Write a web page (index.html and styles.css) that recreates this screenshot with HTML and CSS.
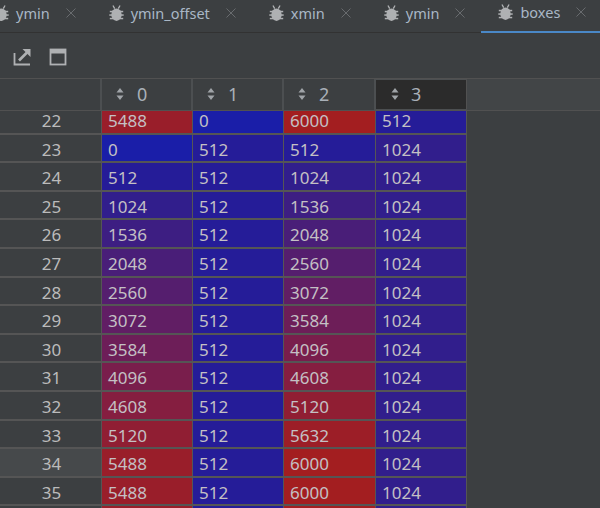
FILE: index.html
```html
<!DOCTYPE html>
<html lang="en">
<head>
<meta charset="utf-8">
<title>boxes</title>
<link rel="stylesheet" href="styles.css">
</head>
<body>
<svg class="defs" width="0" height="0" aria-hidden="true">
  <symbol id="bug" viewBox="0 0 15 16">
    <ellipse cx="7.500" cy="9.700" rx="5.200" ry="6.200"/>
    <path d="M3.400 .8l1.100-.6 1.800 3-1.200.7zM11.600 .8l-1.100-.6-1.800 3 1.200.7z"/>
    <rect x="0.800" y="5.800" width="13.400" height="1.500"/>
    <rect x="0.300" y="9.300" width="14.400" height="1.500"/>
    <rect x="0.800" y="12.800" width="13.400" height="1.500"/>
  </symbol>
  <symbol id="close" viewBox="0 0 10 10">
    <path d="M.5.500l9 9M9.500.500l-9 9"/>
  </symbol>
  <symbol id="sort" viewBox="0 0 8 12">
    <path d="M4 0l3.500 4.500H.5zM4 12L.5 7.500h7z"/>
  </symbol>
</svg>

<nav class="tabs">
  <div class="tab"><svg class="bug"><use href="#bug"/></svg><span>ymin</span><svg class="close"><use href="#close"/></svg></div>
  <div class="tab"><svg class="bug"><use href="#bug"/></svg><span>ymin_offset</span><svg class="close"><use href="#close"/></svg></div>
  <div class="tab"><svg class="bug"><use href="#bug"/></svg><span>xmin</span><svg class="close"><use href="#close"/></svg></div>
  <div class="tab"><svg class="bug"><use href="#bug"/></svg><span>ymin</span><svg class="close"><use href="#close"/></svg></div>
  <div class="tab tab-active"><svg class="bug"><use href="#bug"/></svg><span>boxes</span><svg class="close"><use href="#close"/></svg></div>
</nav>

<div class="toolbar">
  <svg class="tool" viewBox="0 0 18 18"><path class="tool-line" d="M1.500 5v11.500H17"/><path class="tool-thick" d="M6 12.500L14 4.500"/><path class="tool-fill" d="M9.500 1H17.500V9z"/></svg>
  <svg class="tool" viewBox="0 0 18 18"><rect class="tool-line" x="1.500" y="1.500" width="15" height="15"/><rect class="tool-fill" x="1" y="1" width="16" height="4.500"/></svg>
</div>

<div class="head">
  <div class="head-cell head-index"></div>
  <div class="head-cell"><svg class="sort"><use href="#sort"/></svg><span>0</span></div>
  <div class="head-cell"><svg class="sort"><use href="#sort"/></svg><span>1</span></div>
  <div class="head-cell head-wide"><svg class="sort"><use href="#sort"/></svg><span>2</span></div>
  <div class="head-cell head-selected"><svg class="sort"><use href="#sort"/></svg><span>3</span></div>
</div>

<main class="viewport">
  <div class="rows">
    <div class="row"><div class="idx">22</div><div class="c v5488">5488</div><div class="c v0">0</div><div class="c v6000">6000</div><div class="c v512">512</div></div>
    <div class="row"><div class="idx">23</div><div class="c v0">0</div><div class="c v512">512</div><div class="c v512">512</div><div class="c v1024">1024</div></div>
    <div class="row"><div class="idx">24</div><div class="c v512">512</div><div class="c v512">512</div><div class="c v1024">1024</div><div class="c v1024">1024</div></div>
    <div class="row"><div class="idx">25</div><div class="c v1024">1024</div><div class="c v512">512</div><div class="c v1536">1536</div><div class="c v1024">1024</div></div>
    <div class="row"><div class="idx">26</div><div class="c v1536">1536</div><div class="c v512">512</div><div class="c v2048">2048</div><div class="c v1024">1024</div></div>
    <div class="row"><div class="idx">27</div><div class="c v2048">2048</div><div class="c v512">512</div><div class="c v2560">2560</div><div class="c v1024">1024</div></div>
    <div class="row"><div class="idx">28</div><div class="c v2560">2560</div><div class="c v512">512</div><div class="c v3072">3072</div><div class="c v1024">1024</div></div>
    <div class="row"><div class="idx">29</div><div class="c v3072">3072</div><div class="c v512">512</div><div class="c v3584">3584</div><div class="c v1024">1024</div></div>
    <div class="row"><div class="idx">30</div><div class="c v3584">3584</div><div class="c v512">512</div><div class="c v4096">4096</div><div class="c v1024">1024</div></div>
    <div class="row"><div class="idx">31</div><div class="c v4096">4096</div><div class="c v512">512</div><div class="c v4608">4608</div><div class="c v1024">1024</div></div>
    <div class="row"><div class="idx">32</div><div class="c v4608">4608</div><div class="c v512">512</div><div class="c v5120">5120</div><div class="c v1024">1024</div></div>
    <div class="row"><div class="idx">33</div><div class="c v5120">5120</div><div class="c v512">512</div><div class="c v5632">5632</div><div class="c v1024">1024</div></div>
    <div class="row"><div class="idx idx-hover">34</div><div class="c v5488">5488</div><div class="c v512">512</div><div class="c v6000">6000</div><div class="c v1024">1024</div></div>
    <div class="row"><div class="idx">35</div><div class="c v5488">5488</div><div class="c v512">512</div><div class="c v6000">6000</div><div class="c v1024">1024</div></div>
    <div class="row"><div class="idx"></div><div class="c v5488"></div><div class="c v512"></div><div class="c v6000"></div><div class="c v1024"></div></div>
  </div>
</main>
</body>
</html>
```
FILE: styles.css
```css
* { box-sizing: border-box; }
html, body { margin: 0; height: 100%; }
body {
  width: 600px;
  height: 508px;
  overflow: hidden;
  background: #3c3f41;
  color: #bbbbbb;
  font-family: "Noto Sans", "Open Sans", "Liberation Sans", sans-serif;
  font-size: 16px;
}
.defs { position: absolute; }

.tabs {
  display: flex;
  height: 33px;
  border-bottom: 1px solid #323232;
  margin-left: -23px;
  width: 623px;
}
.tab {
  display: flex;
  align-items: center;
  height: 32px;
  padding: 0 16px 6px 17px;
  color: #a9b7c6;
  font-size: 14.500px;
  white-space: nowrap;
}
.tab-active {
  flex: 1;
  height: 33px;
  padding-bottom: 7px;
  border-bottom: 2px solid #4a88c7;
}
.tab span { margin-right: 16px; }
.bug { width: 15px; height: 16px; margin-right: 7px; fill: #afb1b3; flex: none; }
.close { width: 10px; height: 10px; fill: none; stroke: #686b6e; stroke-width: 1; flex: none; }

.toolbar {
  display: flex;
  align-items: center;
  gap: 18px;
  height: 45px;
  padding: 3px 0 0 13px;
}
.tool { width: 18px; height: 18px; flex: none; }
.tool-line { fill: none; stroke: #afb1b3; stroke-width: 1.800; }
.tool-thick { fill: none; stroke: #afb1b3; stroke-width: 2.600; }
.tool-fill { fill: #afb1b3; }

.head {
  display: grid;
  grid-template-columns: 102px 91px 91px 92px 91px;
  height: 33px;
  background: #424547;
  border-top: 1px solid #515151;
  border-bottom: 1px solid #515151;
}
.head-cell {
  display: flex;
  align-items: center;
  padding: 0 0 2px 14px;
  gap: 13px;
  background: #3c3f41;
  border-right: 2px solid #4c4f51;
  font-size: 18px;
  color: #a9b0b8;
}
.head-index { padding: 0; }
.head-selected {
  background: #2b2b2b;
  border: 1px solid #4c4f51;
  border-right: 1px solid #515151;
  margin-left: -1px;
  padding-left: 15px;
  gap: 12px;
}
.sort { width: 8px; height: 12px; fill: #a0a4a8; flex: none; }

.viewport { height: 397px; overflow: hidden; }
.rows { margin-top: -4.900px; width: 467px; background: #555555; }
.row {
  display: grid;
  grid-template-columns: 102px 91px 91px 92px 91px;
  grid-template-rows: 28.600px;
  height: 28.600px;
  font-size: 17px;
  line-height: 26px;
}
.idx {
  padding-top: 2px;
  background: #3c3f41;
  text-align: center;
  border-bottom: 2px solid #555555;
  padding-left: 2px;
  border-right: 1px solid #555555;
}
.idx-hover { background: #46494b; }
.c {
  padding: 2px 0 0 6px;
  border-bottom: 2px solid #555555;
  border-right: 1px solid #555555;
  color: #c4c0c4;
}
.v0 { background: rgb(26, 30, 168); }
.v512 { background: rgb(37, 28, 152); }
.v1024 { background: rgb(49, 30, 140); }
.v1536 { background: rgb(61, 30, 130); }
.v2048 { background: rgb(73, 30, 120); }
.v2560 { background: rgb(85, 30, 110); }
.v3072 { background: rgb(97, 30, 100); }
.v3584 { background: rgb(109, 30, 88); }
.v4096 { background: rgb(121, 30, 76); }
.v4608 { background: rgb(133, 30, 64); }
.v5120 { background: rgb(144, 30, 51); }
.v5488 { background: rgb(153, 30, 42); }
.v5632 { background: rgb(156, 30, 39); }
.v6000 { background: rgb(163, 30, 32); }
```
